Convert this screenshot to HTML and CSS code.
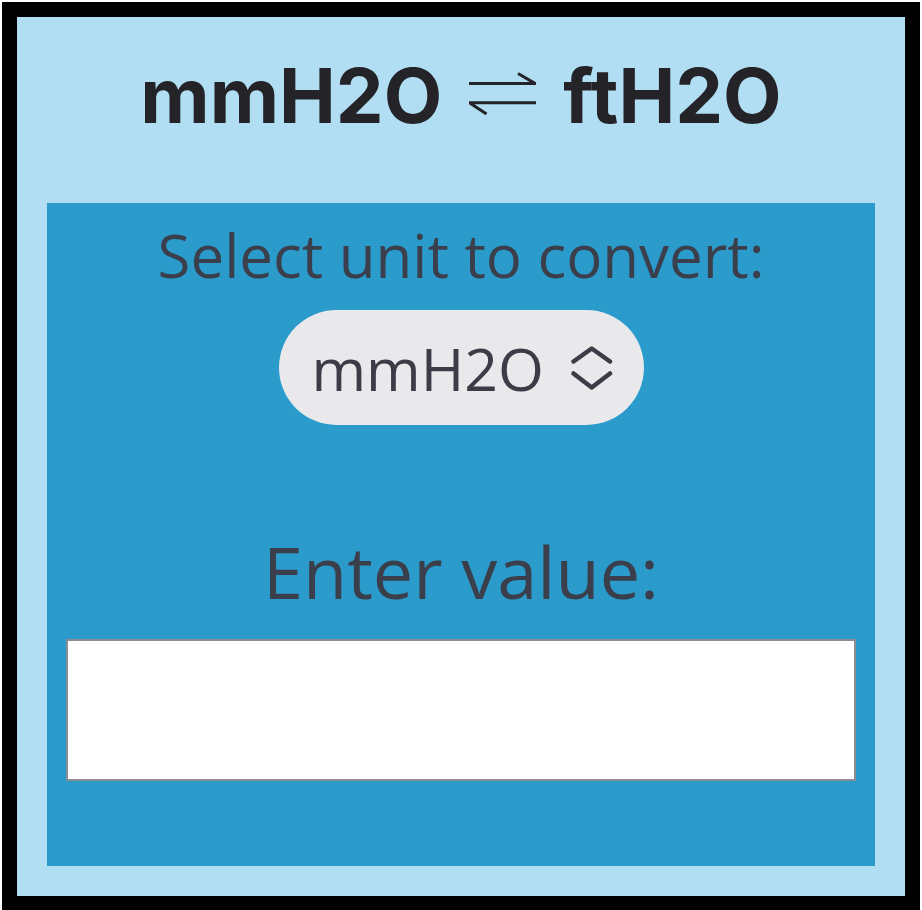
FILE: index.html
```html
<!DOCTYPE html>
<html>
<head>
<meta charset="utf-8" />
    <title>mmH2O to ftH2O</title>
    <link rel="stylesheet" href="styles.css">
</head>
<body>
    <div class="converter">
        <div class="conv_title">
            <h1>mmH2O</h1>
            <svg class="swap_icon" width="67" height="46" viewBox="0 0 67 46">
                <path d="M0 11.5 H66 L49 1.5" />
                <path d="M67 30.8 H0.5 L17.5 42" />
            </svg>
            <h1>ftH2O</h1>
        </div>
        <div id="conv_body">
            <label class="conv_label" for="unit_from">Select unit to convert:</label>
            <div class="unit_select">
                <select id="unit_from">
                    <option>mmH2O</option>
                    <option>ftH2O</option>
                </select>
                <svg class="select_arrows" width="42" height="46" viewBox="0 0 42 46">
                    <polyline points="2.5,16.5 20.7,3.5 39,16.5" />
                    <polyline points="2.5,28.5 20.7,42.5 39,28.5" />
                </svg>
            </div>
            <label class="conv_label big" for="unit_value">Enter value:</label>
            <input type="text" class="value_input" id="unit_value" />
        </div>
    </div>
</body>
</html>
```

FILE: styles.css
```css
* {
    margin:0;
    padding:0;
    box-sizing:border-box;
}
body,html {
    width:100%;
    overflow:hidden;
}
.converter {
    margin:2px 0 0 2px;
    width:918px;
    height:909px;
    border:15px solid #000;
    background:#b1def2;
    padding:0 30px 30px 30px;
}
.conv_title {
    height:186px;
    padding-top:40px;
    display:flex;
    justify-content:center;
    align-items:flex-start;
    gap:27px;
}
    .conv_title h1 {
        font-family:Inter, 'Noto Sans', sans-serif;
        font-size:76px;
        line-height:1;
        font-weight:700;
        color:#232328;
    }
.swap_icon {
    margin-top:15px;
    fill:none;
    stroke:#232328;
    stroke-width:3;
}
#conv_body {
    height:663px;
    background:#2a9bcb;
    padding:16px 19px 0 19px;
    display:flex;
    flex-direction:column;
    align-items:center;
}
.conv_label {
    font-family:'Open Sans', 'Noto Sans', sans-serif;
    font-size:60px;
    line-height:1.2;
    color:#3b3f4c;
}
    .conv_label.big {
        font-size:72px;
        margin-top:103px;
    }
.unit_select {
    margin-top:19px;
    height:115px;
    width:365px;
    border-radius:58px;
    background:#e9e9ec;
    display:flex;
    align-items:center;
    padding:0 31px 0 33px;
    gap:8px;
}
    .unit_select select {
        appearance:none;
        -webkit-appearance:none;
        border:none;
        outline:none;
        background:transparent;
        font-family:'Open Sans', 'Noto Sans', sans-serif;
        font-size:59px;
        color:#3b3c46;
        flex:1;
        width:0;
        min-width:0;
    }
.select_arrows {
    fill:none;
    stroke:#3b3c46;
    stroke-width:4.5;
    stroke-linecap:round;
    stroke-linejoin:round;
    flex-shrink:0;
}
.value_input {
    margin-top:25px;
    width:100%;
    height:142px;
    border:2px solid #8c8c93;
    background:#fff;
    font-family:'Open Sans', sans-serif;
    font-size:40px;
    padding:0 12px;
    outline:none;
}
```
